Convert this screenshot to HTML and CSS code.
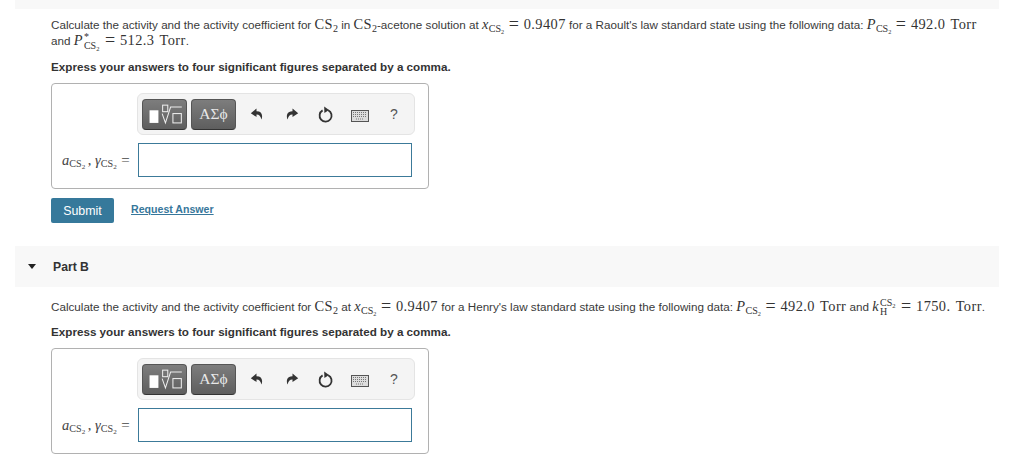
FILE: index.html
```html
<!DOCTYPE html>
<html lang="en">
<head>
<meta charset="utf-8">
<title>Part B</title>
<link rel="stylesheet" href="styles.css">
</head>
<body>
<svg class="defs" width="0" height="0" aria-hidden="true">
  <symbol id="i-undo" viewBox="0 0 14 14"><path d="M6.500 1.500 L0.800 6.200 L6.500 10 V7.400 C9 7.300 10.600 8.600 11.400 12.600 C13.200 8 11.600 4.200 6.500 4.300 Z"/></symbol>
  <symbol id="i-redo" viewBox="0 0 14 14"><path d="M7.500 1.500 L13.200 6.200 L7.500 10 V7.400 C5 7.300 3.400 8.600 2.600 12.600 C0.800 8 2.400 4.200 7.500 4.300 Z"/></symbol>
  <symbol id="i-reset" viewBox="0 0 16 17"><path class="ring" d="M10.200 4.200 A6 6 0 1 1 4.600 4.400"/><path d="M6.200 0.400 L11 3.900 L6.400 7 Z"/></symbol>
  <symbol id="i-keys" viewBox="0 0 18 12"><rect class="kb" x="0.500" y="0.500" width="17" height="11"/><path class="kbkeys" d="M2 2.500h14M2 4.500h14M2 6.500h14M5 9h8"/></symbol>
  <symbol id="i-templ" viewBox="0 0 45 31"><rect class="t-fill" x="6.500" y="11" width="9.500" height="13.500"/><rect class="t-line" x="20.500" y="5.500" width="5.500" height="7"/><rect class="t-line" x="31.500" y="14.500" width="9" height="10"/><path class="t-line" d="M20 14.500 L23.500 24.500 L29 7.500 H41"/></symbol>
</svg>

<main class="page">
  <div class="band-top"></div>

  <section class="part part-a">
    <p class="prompt prompt-two">Calculate the activity and the activity coefficient for <span class="m">CS<sub>2</sub></span> in <span class="m">CS<sub>2</sub></span>-acetone solution at <span class="m"><i>x</i><sub>CS<sub>2</sub></sub> <span class="rel">=</span> 0.9407</span> for a Raoult's law standard state using the following data: <span class="m"><i>P</i><sub>CS<sub>2</sub></sub> <span class="rel">=</span> 492.0 Torr</span><br>and <span class="m"><i>P</i><span class="stack"><span class="sup-s">*</span><span class="sub-s">CS<sub>2</sub></span></span> <span class="rel">=</span> 512.3 Torr</span>.</p>
    <p class="instruct">Express your answers to four significant figures separated by a comma.</p>
    <div class="answer">
      <div class="toolbar">
        <button class="tbtn tbtn-templ" type="button"><svg class="templ"><use href="#i-templ"/></svg></button>
        <button class="tbtn tbtn-greek" type="button">ΑΣϕ</button>
        <svg class="ic ic-undo"><use href="#i-undo"/></svg>
        <svg class="ic ic-redo"><use href="#i-redo"/></svg>
        <svg class="ic ic-reset"><use href="#i-reset"/></svg>
        <svg class="ic ic-keys"><use href="#i-keys"/></svg>
        <span class="help">?</span>
      </div>
      <div class="entry">
        <span class="label"><i>a</i><sub>CS<sub>2</sub></sub> <span class="comma">,</span> <i>γ</i><sub>CS<sub>2</sub></sub> <span class="eq">=</span></span>
        <div class="field"></div>
      </div>
    </div>
    <div class="actions">
      <button class="submit" type="button">Submit</button>
      <a class="request" href="#">Request Answer</a>
    </div>
  </section>

  <header class="part-head">
    <span class="tri"></span>
    <span class="part-name">Part B</span>
  </header>

  <section class="part part-b">
    <p class="prompt">Calculate the activity and the activity coefficient for <span class="m">CS<sub>2</sub></span> at <span class="m"><i>x</i><sub>CS<sub>2</sub></sub> <span class="rel">=</span> 0.9407</span> for a Henry's law standard state using the following data: <span class="m"><i>P</i><sub>CS<sub>2</sub></sub> <span class="rel">=</span> 492.0 Torr</span> and <span class="m"><i>k</i><span class="stack"><span class="sup-s">CS<sub>2</sub></span><span class="sub-s">H</span></span> <span class="rel">=</span> 1750. Torr</span>.</p>
    <p class="instruct">Express your answers to four significant figures separated by a comma.</p>
    <div class="answer">
      <div class="toolbar">
        <button class="tbtn tbtn-templ" type="button"><svg class="templ"><use href="#i-templ"/></svg></button>
        <button class="tbtn tbtn-greek" type="button">ΑΣϕ</button>
        <svg class="ic ic-undo"><use href="#i-undo"/></svg>
        <svg class="ic ic-redo"><use href="#i-redo"/></svg>
        <svg class="ic ic-reset"><use href="#i-reset"/></svg>
        <svg class="ic ic-keys"><use href="#i-keys"/></svg>
        <span class="help">?</span>
      </div>
      <div class="entry">
        <span class="label"><i>a</i><sub>CS<sub>2</sub></sub> <span class="comma">,</span> <i>γ</i><sub>CS<sub>2</sub></sub> <span class="eq">=</span></span>
        <div class="field"></div>
      </div>
    </div>
  </section>
</main>
</body>
</html>
```
FILE: styles.css
```css
* { box-sizing: border-box; }
html, body { margin: 0; padding: 0; background: #fff; overflow: hidden; }
body { font-family: "Liberation Sans", Arial, sans-serif; font-size: 12px; color: #333; height: 462px; }
.defs { display: block; height: 0; }

.page { margin-left: 15px; width: 984px; }
.band-top { height: 9px; background: #f8f8f8; }

.part { padding-left: 36px; }
.part-a { padding-top: 8px; }
.part-b { padding-top: 13px; }

.prompt { margin: 0; font-size: 11.66px; line-height: 14px; white-space: nowrap; color: #3a3a3a; }
.prompt-two { line-height: 16px; }
.m { font-family: "Liberation Serif", "Times New Roman", serif; font-size: 14.4px; line-height: 0; color: #333; letter-spacing: 0.4px; word-spacing: 1.5px; }
.m i { font-style: italic; }
.rel { font-size: 18px; margin: 0 -1px; vertical-align: -1px; line-height: 0; }
sub { font-size: 70%; line-height: 0; vertical-align: -0.25em; letter-spacing: 0; }
sub sub { font-size: 62%; }
.stack { display: inline-flex; flex-direction: column; height: 18px; margin: -9px 1px; vertical-align: 5px; font-size: 10px; line-height: 9px; letter-spacing: 0; }
.stack sub { font-size: 65%; }
.sup-s, .sub-s { display: block; }

.instruct { margin: 0; font-size: 11.66px; font-weight: bold; line-height: 14px; color: #333; }
.part-a .instruct { margin-top: 11px; }
.part-b .instruct { margin-top: 11px; }

.answer { width: 378px; height: 106px; border: 1px solid #b1b1b1; border-radius: 4px; background: #fff; }
.part-a .answer { margin-top: 9px; }
.part-b .answer { margin-top: 9px; }

.toolbar { display: flex; align-items: center; width: 278px; height: 42px; margin: 9px 0 0 85px; padding-left: 4px; background: #f4f4f4; border: 1px solid #e4e4e4; border-radius: 6px; }
.tbtn { height: 31px; padding: 0; border: 1px solid #555; border-bottom-color: #333; border-radius: 4px; background: linear-gradient(#7d7d7d, #5e5e5e); color: #fff; display: flex; align-items: center; justify-content: center; }
.tbtn-templ { width: 45px; }
.tbtn-greek { width: 45px; margin-left: 4px; font-family: "Liberation Serif", serif; font-size: 15.5px; color: #e8e8e8; }
.templ { width: 43px; height: 29px; display: block; }
.t-fill { fill: #fff; }
.t-line { fill: none; stroke: #eee; stroke-width: 1.1; }

.ic { display: block; fill: #333; flex: none; }
.ic-undo { width: 14px; height: 14px; margin-left: 14px; }
.ic-redo { width: 14px; height: 14px; margin-left: 21px; }
.ic-reset { width: 16px; height: 17px; margin-left: 19px; }
.ring { fill: none; stroke: #333; stroke-width: 1.8; }
.ic-keys { width: 18px; height: 12px; margin-left: 17px; margin-top: 3px; }
.kb { fill: #ddd; stroke: #555; }
.kbkeys { fill: none; stroke: #777; stroke-width: 1; stroke-dasharray: 1 1; }
.help { margin-left: 21px; font-size: 14px; color: #555; }

.entry { display: flex; align-items: center; height: 34px; margin-top: 8px; }
.label { width: 86px; padding-left: 10px; font-family: "Liberation Serif", serif; font-size: 14.5px; color: #444; white-space: nowrap; }
.label sub { font-size: 70%; }
.comma { margin-left: -1px; }
.eq { font-size: 15px; margin-left: 1px; }
.field { width: 274px; height: 34px; border: 1px solid #3c7a99; background: #fff; }

.actions { display: flex; align-items: center; margin-top: 9px; height: 25px; }
.submit { width: 63px; height: 25px; padding: 0; border: 0; border-radius: 2px; background: #36799b; color: #fff; font-family: "Liberation Sans", Arial, sans-serif; font-size: 12.4px; }
.request { margin-left: 17px; margin-top: -3px; font-size: 10.6px; font-weight: bold; color: #37779b; text-decoration: underline; }

.part-head { display: flex; align-items: center; height: 41px; margin-top: 23px; background: #f8f8f8; }
.tri { width: 0; height: 0; margin-left: 13px; border-left: 4.5px solid transparent; border-right: 4.5px solid transparent; border-top: 5px solid #222; }
.part-name { margin-left: 17px; font-size: 12.2px; font-weight: bold; color: #333; }
```
